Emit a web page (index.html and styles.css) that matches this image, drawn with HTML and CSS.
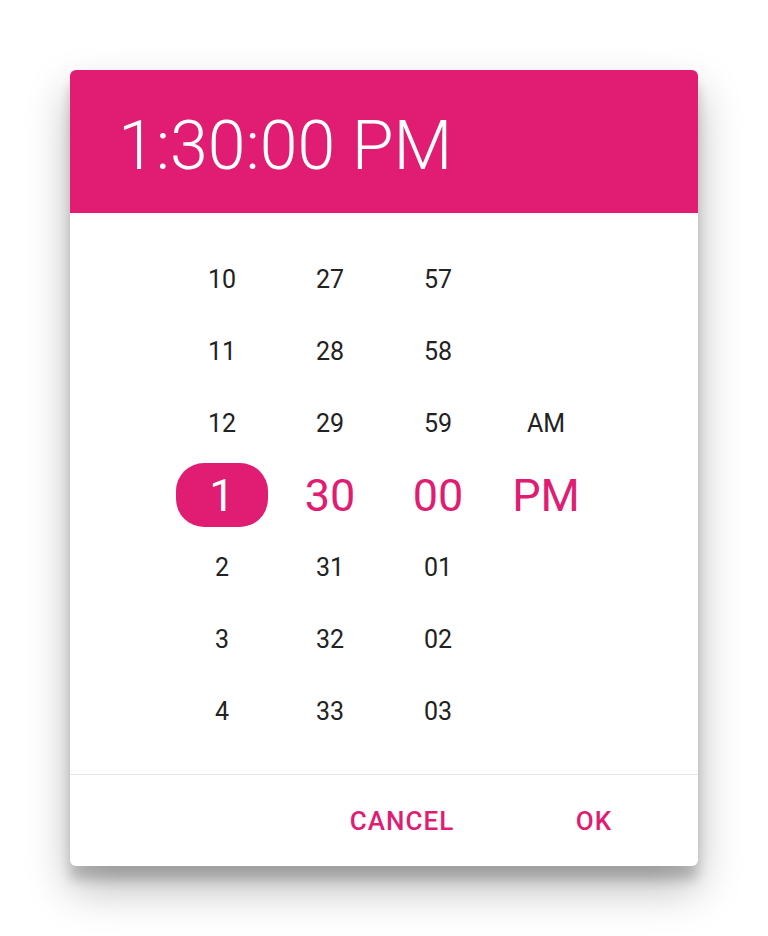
FILE: index.html
```html
<!DOCTYPE html>
<html lang="en">
<head>
  <meta charset="UTF-8">
  <title>Time Picker</title>
  <link rel="stylesheet" href="styles.css">
</head>
<body>
  <div class="dialog">
    <div class="dialog-header">
      <span class="current-time">1:30:00 PM</span>
    </div>

    <div class="picker">
      <div class="col">
        <div class="cell">10</div>
        <div class="cell">11</div>
        <div class="cell">12</div>
        <div class="cell selected"><span class="pill">1</span></div>
        <div class="cell">2</div>
        <div class="cell">3</div>
        <div class="cell">4</div>
      </div>
      <div class="col">
        <div class="cell">27</div>
        <div class="cell">28</div>
        <div class="cell">29</div>
        <div class="cell selected">30</div>
        <div class="cell">31</div>
        <div class="cell">32</div>
        <div class="cell">33</div>
      </div>
      <div class="col">
        <div class="cell">57</div>
        <div class="cell">58</div>
        <div class="cell">59</div>
        <div class="cell selected">00</div>
        <div class="cell">01</div>
        <div class="cell">02</div>
        <div class="cell">03</div>
      </div>
      <div class="col">
        <div class="cell"></div>
        <div class="cell"></div>
        <div class="cell">AM</div>
        <div class="cell selected">PM</div>
        <div class="cell"></div>
        <div class="cell"></div>
        <div class="cell"></div>
      </div>
    </div>

    <div class="dialog-actions">
      <button class="btn btn-cancel">Cancel</button>
      <button class="btn btn-ok">OK</button>
    </div>
  </div>
</body>
</html>
```

FILE: styles.css
```css
body {
  margin: 0;
  padding: 70px;
  background-color: #ffffff;
  font-family: Roboto, 'Noto Sans', sans-serif;
}

.dialog {
  width: 628px;
  background: #ffffff;
  border-radius: 6px;
  overflow: hidden;
  box-shadow: 0 22px 44px rgba(0, 0, 0, 0.28), 0 14px 12px rgba(0, 0, 0, 0.18);
}

.dialog-header {
  height: 143px;
  background-color: #e01c73;
  display: flex;
  align-items: center;
  padding: 8px 48px 0;
  box-sizing: border-box;
}

.current-time {
  color: #ffffff;
  font-size: 68px;
  font-weight: 300;
}

.picker {
  display: flex;
  justify-content: center;
  padding: 30px 0 27px;
  border-bottom: 1px solid #e8e8e8;
}

.col {
  width: 108px;
}

.cell {
  height: 72px;
  display: flex;
  align-items: center;
  justify-content: center;
  font-size: 25px;
  color: #222222;
}

.cell.selected {
  font-size: 45px;
  color: #e01c73;
}

.pill {
  width: 92px;
  height: 64px;
  border-radius: 28px;
  background-color: #e01c73;
  color: #ffffff;
  display: flex;
  align-items: center;
  justify-content: center;
}

.dialog-actions {
  height: 91px;
  display: flex;
  justify-content: flex-end;
  align-items: center;
  padding: 0 44px 0 0;
}

.btn {
  background: none;
  border: none;
  font-family: Roboto, 'Noto Sans', sans-serif;
  font-size: 26px;
  font-weight: 500;
  letter-spacing: 1px;
  text-transform: uppercase;
  color: #e01c73;
  cursor: pointer;
  padding: 0;
}

.btn-cancel {
  width: 150px;
}

.btn-ok {
  width: 120px;
  margin-left: 57px;
}
```
